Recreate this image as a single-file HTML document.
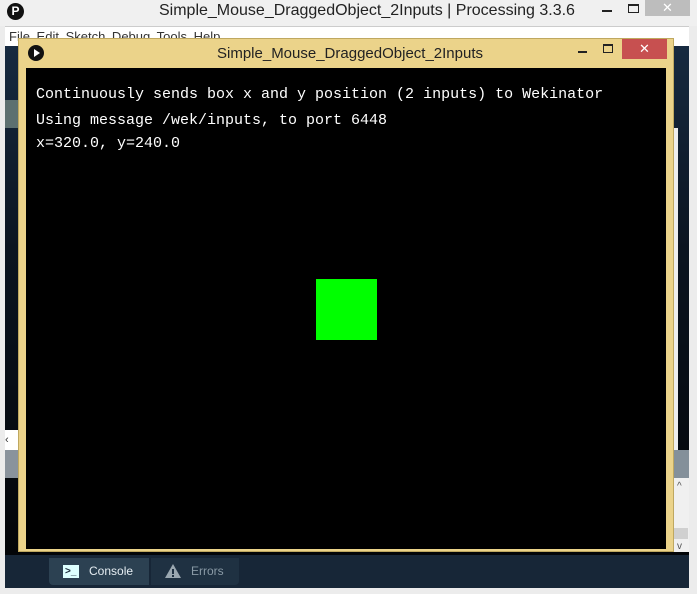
<!DOCTYPE html>
<html><head><meta charset="utf-8"><style>
*{margin:0;padding:0;box-sizing:border-box}
body{width:697px;height:594px;overflow:hidden;background:#ececec;position:relative;font-family:"Liberation Sans",sans-serif}
.a{position:absolute}
.mono{font-family:"Liberation Mono",monospace;font-size:15px;color:#fff;white-space:pre;letter-spacing:0}
</style></head><body>
<!-- outer title bar -->
<div class="a" style="left:0;top:0;width:697px;height:26px;background:#f0f0f0"></div>
<div class="a" style="left:7px;top:3px;width:17px;height:17px;border-radius:50%;background:#111;color:#fff;font-size:12px;font-weight:bold;text-align:center;line-height:17px">P</div>
<div class="a" style="left:159px;top:2px;font-size:16px;color:#222">Simple_Mouse_DraggedObject_2Inputs | Processing 3.3.6</div>
<div class="a" style="left:602px;top:10px;width:10px;height:2px;background:#222"></div>
<div class="a" style="left:628px;top:4px;width:11px;height:9px;border:1px solid #222;border-top-width:2px"></div>
<div class="a" style="left:645px;top:0;width:45px;height:16px;background:#bdbdbd;color:#fff;text-align:center;font-size:13px;line-height:15px">✕</div>
<!-- menu bar -->
<div class="a" style="left:5px;top:26px;width:684px;height:20px;background:#fff;border-top:1px solid #ccc"></div>
<div class="a" style="left:9px;top:29px;font-size:13px;color:#333;word-spacing:3px">File Edit Sketch Debug Tools Help</div>
<!-- editor dark -->
<div class="a" style="left:5px;top:46px;width:684px;height:510px;background:linear-gradient(#172a40,#0b1420 40%,#030508)"></div>
<div class="a" style="left:5px;top:100px;width:15px;height:28px;background:#5d7070"></div>
<div class="a" style="left:5px;top:430px;width:15px;height:20px;background:#fff;font-size:11px;line-height:20px;color:#333">‹</div>
<div class="a" style="left:5px;top:450px;width:15px;height:28px;background:#8a939c"></div>
<div class="a" style="left:673px;top:128px;width:5px;height:420px;background:#eeeeee"></div>
<div class="a" style="left:673px;top:450px;width:16px;height:28px;background:#84909a"></div>
<div class="a" style="left:673px;top:478px;width:16px;height:74px;background:#f0f0f0"></div>
<div class="a" style="left:674px;top:528px;width:14px;height:11px;background:#d0d0d0"></div>
<div class="a" style="left:677px;top:481px;font-size:10px;color:#555">^</div>
<div class="a" style="left:677px;top:541px;font-size:10px;color:#555">v</div>
<!-- bottom bar -->
<div class="a" style="left:5px;top:555px;width:684px;height:33px;background:#172637"></div>
<div class="a" style="left:49px;top:558px;width:100px;height:27px;background:#2c4152;border-radius:0 0 0 4px"></div>
<div class="a" style="left:151px;top:558px;width:88px;height:27px;background:#1f3142;border-radius:0 0 4px 0"></div>
<div class="a" style="left:63px;top:565px;width:16px;height:13px;background:#dff;color:#172637;font-size:10px;font-weight:bold;line-height:13px;padding-left:2px">&gt;_</div>
<div class="a" style="left:89px;top:564px;font-size:12px;color:#e6edf2">Console</div>
<svg class="a" style="left:164px;top:563px" width="18" height="16"><path d="M9 1L17 15H1Z" fill="#9aa7b0"/><rect x="8" y="6" width="2" height="5" fill="#1f3142"/><rect x="8" y="12" width="2" height="2" fill="#1f3142"/></svg>
<div class="a" style="left:191px;top:564px;font-size:12px;color:#8a9aa6">Errors</div>
<!-- inner window -->
<div class="a" style="left:18px;top:38px;width:656px;height:514px;background:#ebd38a;border:1px solid #bfa860"></div>
<div class="a" style="left:28px;top:45px;width:16px;height:16px;border-radius:50%;background:#111"></div>
<div class="a" style="left:34px;top:49px;width:0;height:0;border-left:6px solid #fff;border-top:4px solid transparent;border-bottom:4px solid transparent"></div>
<div class="a" style="left:217px;top:45px;font-size:15px;color:#222">Simple_Mouse_DraggedObject_2Inputs</div>
<div class="a" style="left:578px;top:51px;width:9px;height:2px;background:#222"></div>
<div class="a" style="left:603px;top:44px;width:10px;height:9px;border:1px solid #222;border-top-width:2px"></div>
<div class="a" style="left:622px;top:39px;width:45px;height:20px;background:#c75050;color:#fff;text-align:center;font-size:13px;line-height:20px">✕</div>
<div class="a" style="left:26px;top:68px;width:640px;height:481px;background:#000"></div>
<div class="a mono" style="left:36px;top:86px">Continuously sends box x and y position (2 inputs) to Wekinator</div>
<div class="a mono" style="left:36px;top:112px">Using message /wek/inputs, to port 6448</div>
<div class="a mono" style="left:36px;top:135px">x=320.0, y=240.0</div>
<div class="a" style="left:316px;top:279px;width:61px;height:61px;background:#00ff00"></div>
</body></html>
